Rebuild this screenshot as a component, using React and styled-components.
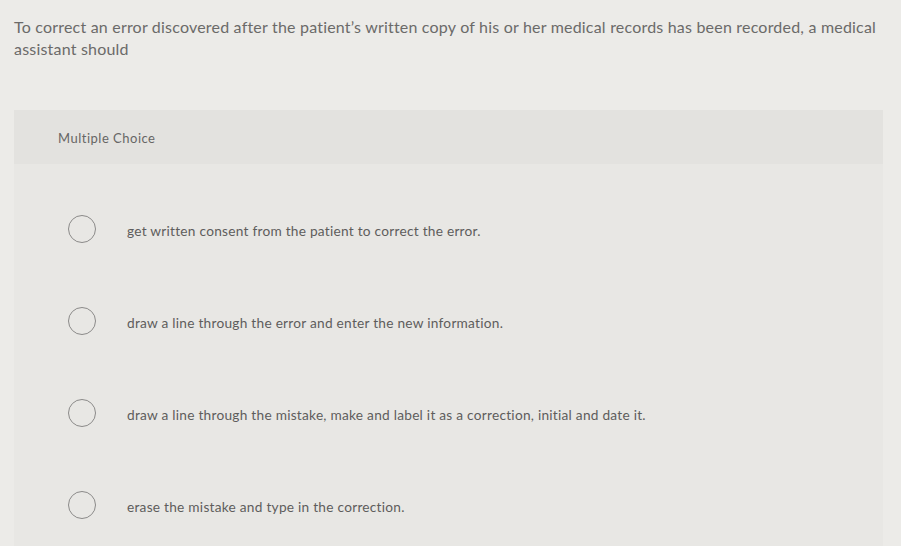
import React from "react";
import styled, { createGlobalStyle } from "styled-components";

const Global = createGlobalStyle`
  html, body { margin: 0; padding: 0; background: #ecebe8; }
  body { font-family: Lato, "Open Sans", sans-serif; }
`;

const Page = styled.div`
  width: 901px;
  height: 546px;
  overflow: hidden;
  background: #ecebe8;
  padding: 16px 14px 0 14px;
  box-sizing: border-box;
`;

const Question = styled.p`
  margin: 0;
  font-size: 16px;
  line-height: 22px;
  color: #6b6a69;
  letter-spacing: 0.2px;
`;

const Panel = styled.section`
  margin-top: 50px;
  margin-right: 4px;
  background: #e8e7e4;
`;

const PanelHeader = styled.div`
  height: 54px;
  display: flex;
  align-items: center;
  padding-left: 44px;
  padding-top: 2px;
  box-sizing: border-box;
  background: #e3e2df;
  font-size: 13px;
  letter-spacing: 0.5px;
  color: #676665;
`;

const Options = styled.div`
  display: flex;
  flex-direction: column;
  padding-top: 19px;
`;

const Option = styled.label`
  height: 92px;
  display: flex;
  align-items: center;
  padding-left: 54px;
  box-sizing: border-box;
  cursor: pointer;
`;

const Radio = styled.span`
  width: 28px;
  height: 28px;
  border-radius: 50%;
  border: 1.8px solid #8b8a89;
  box-sizing: border-box;
  flex: none;
  margin-right: 31px;
`;

const OptionText = styled.span`
  font-size: 13.7px;
  letter-spacing: 0.25px;
  color: #5e5d5c;
  padding-top: 2px;
`;

const options = [
  "get written consent from the patient to correct the error.",
  "draw a line through the error and enter the new information.",
  "draw a line through the mistake, make and label it as a correction, initial and date it.",
  "erase the mistake and type in the correction.",
];

export default function App() {
  return (
    <Page>
      <Global />
      <Question>
        To correct an error discovered after the patient’s written copy of his or her medical records has been recorded, a medical assistant should
      </Question>
      <Panel>
        <PanelHeader>Multiple Choice</PanelHeader>
        <Options>
          {options.map((o) => (
            <Option key={o}>
              <Radio />
              <OptionText>{o}</OptionText>
            </Option>
          ))}
        </Options>
      </Panel>
    </Page>
  );
}
